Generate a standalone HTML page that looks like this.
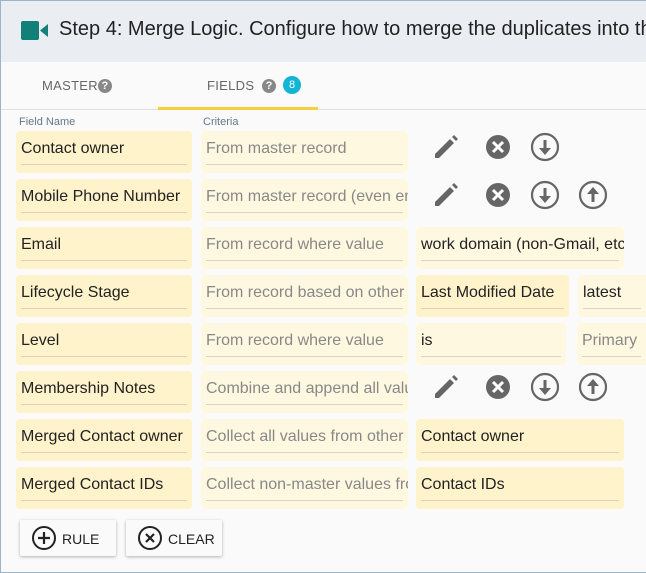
<!DOCTYPE html>
<html><head><style>
*{box-sizing:border-box;margin:0;padding:0}
html,body{width:646px;height:573px;overflow:hidden}
body{font-family:"Liberation Sans",sans-serif;background:#fafafa;position:relative}
.frame{position:absolute;left:0;top:0;width:646px;height:573px;border:1px solid #9ab4c8;border-right:none}
.hdr{position:absolute;left:1px;top:1px;right:0;height:61px;background:#eaeef2;overflow:hidden}
.hdr .t{position:absolute;left:58px;top:17px;font-size:20px;color:#222;white-space:nowrap}
.tab{position:absolute;top:78px;font-size:13px;color:#666;letter-spacing:.3px}
.q{display:inline-block;width:14px;height:14px;border-radius:50%;background:#888;color:#fff;font-size:11px;text-align:center;line-height:14px;font-weight:bold;vertical-align:1px}
.lbl{position:absolute;top:116px;font-size:11px;color:#667788}
.f{position:absolute;height:42px;border-radius:4px;background:#fff8e1;overflow:hidden}
.f.d{background:#fff3cc}
.f span{position:absolute;left:5px;top:9px;font-size:16px;color:#222;white-space:nowrap}
.f.p span{color:#888}
.f:after{content:"";position:absolute;left:5px;right:5px;top:33px;border-top:1px solid #ddd5b8}
.btn{position:absolute;top:520px;height:36px;width:96px;background:#fafafa;border-radius:2px;box-shadow:0 1px 3px rgba(0,0,0,.3);font-size:14px;color:#222}
.btn svg{position:absolute;left:12px;top:6px}
.btn b{position:absolute;left:42px;top:11px;font-weight:normal}
</style></head><body>
<div class="hdr"><svg style="position:absolute;left:20px;top:20px" width="28" height="19" viewBox="0 0 28 19"><rect x="0" y="0" width="18" height="19" rx="2" fill="#138078"/><path d="M19 9.5 L27 3 V16 Z" fill="#138078"/></svg><div class="t">Step 4: Merge Logic. Configure how to merge the duplicates into the master</div></div>
<div style="position:absolute;left:1px;right:0;top:109px;border-top:1px solid #e0e0e0"></div>
<div class="tab" style="left:42px">MASTER<span class="q">?</span></div>
<div class="tab" style="left:207px">FIELDS &nbsp;<span class="q">?</span></div>
<div style="position:absolute;left:283px;top:76px;width:18px;height:18px;border-radius:50%;background:#14b4d4;color:#fff;font-size:11px;text-align:center;line-height:18px">8</div>
<div style="position:absolute;left:158px;top:107px;width:160px;height:3px;background:#f5cf3c"></div>
<div class="lbl" style="left:19px">Field Name</div><div class="lbl" style="left:203px">Criteria</div>

<div class="f d" style="left:16px;top:131px;width:176px"><span>Contact owner</span></div>
<div class="f p" style="left:201px;top:131px;width:207px"><span>From master record</span></div>
<div class="f d" style="left:16px;top:179px;width:176px"><span>Mobile Phone Number</span></div>
<div class="f p" style="left:201px;top:179px;width:207px"><span>From master record (even empty)</span></div>
<div class="f d" style="left:16px;top:227px;width:176px"><span>Email</span></div>
<div class="f p" style="left:201px;top:227px;width:207px"><span>From record where value</span></div>
<div class="f" style="left:416px;top:227px;width:208px"><span>work domain (non-Gmail, etc.)</span></div>
<div class="f d" style="left:16px;top:275px;width:176px"><span>Lifecycle Stage</span></div>
<div class="f p" style="left:201px;top:275px;width:207px"><span>From record based on other field</span></div>
<div class="f d" style="left:416px;top:275px;width:153px"><span>Last Modified Date</span></div>
<div class="f" style="left:578px;top:275px;width:68px;border-radius:4px 0 0 4px"><span>latest</span></div>
<div class="f d" style="left:16px;top:323px;width:176px"><span>Level</span></div>
<div class="f p" style="left:201px;top:323px;width:207px"><span>From record where value</span></div>
<div class="f" style="left:416px;top:323px;width:150px"><span>is</span></div>
<div class="f p" style="left:577px;top:323px;width:69px;border-radius:4px 0 0 4px"><span>Primary</span></div>
<div class="f d" style="left:16px;top:371px;width:176px"><span>Membership Notes</span></div>
<div class="f p" style="left:201px;top:371px;width:207px"><span>Combine and append all values</span></div>
<div class="f d" style="left:16px;top:419px;width:176px"><span>Merged Contact owner</span></div>
<div class="f p" style="left:201px;top:419px;width:207px"><span>Collect all values from other records</span></div>
<div class="f d" style="left:416px;top:419px;width:208px"><span>Contact owner</span></div>
<div class="f d" style="left:16px;top:467px;width:176px"><span>Merged Contact IDs</span></div>
<div class="f p" style="left:201px;top:467px;width:207px"><span>Collect non-master values from</span></div>
<div class="f d" style="left:416px;top:467px;width:208px"><span>Contact IDs</span></div>

<svg width="646" height="573" style="position:absolute;left:0;top:0">
<defs>
<g id="pen" fill="#666"><path d="M-11 7 L4 -8 L8 -4 L-7 11 L-11 11 Z"/><path d="M6 -10 L8 -12 L12 -8 L10 -6 Z"/></g>
<g id="x"><circle r="12" fill="#666"/><path d="M-5 -5 L5 5 M5 -5 L-5 5" stroke="#fff" stroke-width="3"/></g>
<g id="dn"><circle r="13" fill="none" stroke="#666" stroke-width="2.2"/><path d="M0 -7 V3" stroke="#666" stroke-width="3"/><path d="M-6 1 L6 1 L0 8 Z" fill="#666"/></g>
<g id="up"><circle r="13" fill="none" stroke="#666" stroke-width="2.2"/><path d="M0 7 V-3" stroke="#666" stroke-width="3"/><path d="M-6 -1 L6 -1 L0 -8 Z" fill="#666"/></g>
</defs>
<use href="#pen" x="446" y="147"/><use href="#x" x="498" y="147"/><use href="#dn" x="545" y="147"/>
<use href="#pen" x="446" y="195"/><use href="#x" x="498" y="195"/><use href="#dn" x="545" y="195"/><use href="#up" x="593" y="195"/>
<use href="#pen" x="446" y="387"/><use href="#x" x="498" y="387"/><use href="#dn" x="545" y="387"/><use href="#up" x="593" y="387"/>
</svg>
<div class="btn" style="left:20px"><svg width="24" height="24"><circle cx="12" cy="12" r="11" fill="none" stroke="#222" stroke-width="2"/><path d="M12 6V18M6 12H18" stroke="#222" stroke-width="2.2"/></svg><b>RULE</b></div>
<div class="btn" style="left:126px"><svg width="24" height="24"><circle cx="12" cy="12" r="11" fill="none" stroke="#222" stroke-width="2"/><path d="M8 8L16 16M16 8L8 16" stroke="#222" stroke-width="2.2"/></svg><b>CLEAR</b></div>
<div class="frame"></div>
</body></html>
